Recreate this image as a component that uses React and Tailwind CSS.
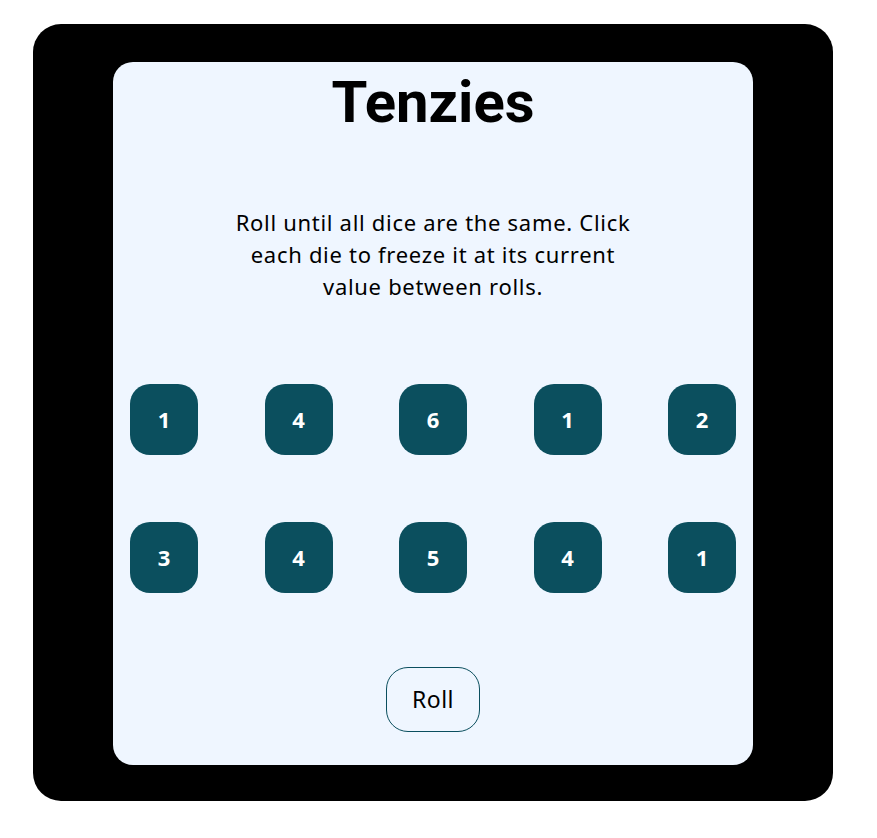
import React from 'react';

const dice = [1, 4, 6, 1, 2, 3, 4, 5, 4, 1];

function Die({ value }) {
  return (
    <button className="w-[68px] h-[71px] rounded-[20px] bg-[#0b4f5e] text-white text-[22px] font-bold flex items-center justify-center [font-family:'Noto_Sans',sans-serif]">
      {value}
    </button>
  );
}

export default function App() {
  return (
    <div className="w-[877px] h-[838px] bg-white pt-6 pl-[33px]">
      <div className="w-[800px] h-[777px] bg-black rounded-[28px] pt-[38px] pl-20">
        <main className="w-[640px] h-[703px] bg-[#eff6ff] rounded-[20px] flex flex-col items-center px-[17px]">
          <h1 className="mt-[6px] text-[58px] leading-[68px] font-bold text-black [font-family:Roboto,sans-serif]">Tenzies</h1>
          <p className="mt-[70px] w-[420px] text-center text-[22px] leading-[32px] tracking-[0.7px] text-black [font-family:'Noto_Sans',sans-serif]">
            Roll until all dice are the same. Click each die to freeze it at its current value between rolls.
          </p>
          <div className="mt-[82px] w-full flex flex-col gap-[67px]">
            {[dice.slice(0, 5), dice.slice(5)].map((row, r) => (
              <div key={r} className="flex justify-between">
                {row.map((d, i) => (
                  <Die key={i} value={d} />
                ))}
              </div>
            ))}
          </div>
          <button className="mt-[74px] w-[94px] h-[65px] rounded-[22px] border border-[#0b4f5e] text-[23px] tracking-[0.5px] text-black [font-family:'Noto_Sans',sans-serif]">
            Roll
          </button>
        </main>
      </div>
    </div>
  );
}
